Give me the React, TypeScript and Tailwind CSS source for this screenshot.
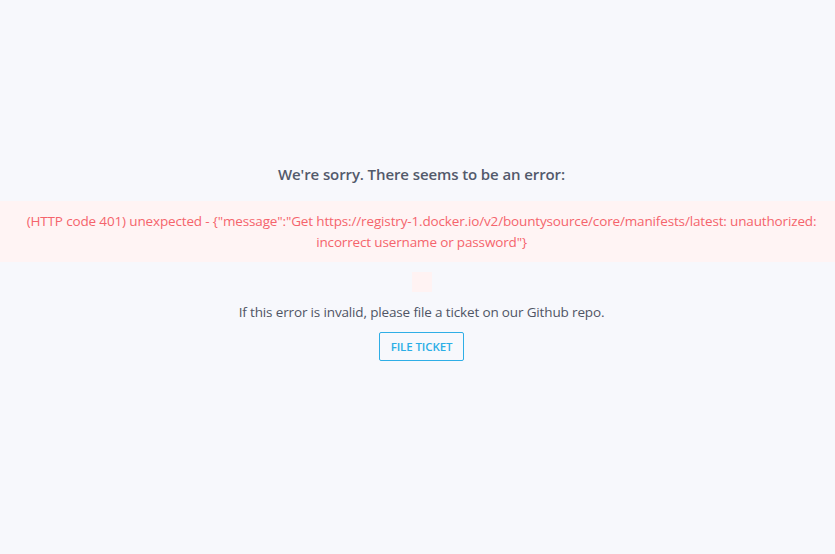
export default function App() {
  return (
    <div className="min-h-screen bg-[#f7f8fc] font-['Open_Sans',sans-serif] pt-[164px]">
      <h2 className="pl-2 text-center text-[15px] font-semibold leading-5 tracking-[-0.1px] text-[#535a6b]">
        We're sorry. There seems to be an error:
      </h2>
      <div className="mt-[17px] bg-[#fff4f4] pt-[10px] pb-[9px] pl-6 pr-4 text-center text-[13.5px] leading-[21px] tracking-[-0.15px] text-[#f5646c]">
        (HTTP code 401) unexpected - {'{"message":"Get https://registry-1.docker.io/v2/bountysource/core/manifests/latest: unauthorized: incorrect username or password"}'}
      </div>
      <div className="mt-[10px] flex justify-center pl-2">
        <div className="h-5 w-5 bg-[#fff3f3]" />
      </div>
      <p className="mt-[10px] pl-2 text-center text-[13.5px] leading-5 tracking-[-0.15px] text-[#4f5565]">
        If this error is invalid, please file a ticket on our Github repo.
      </p>
      <div className="mt-[10px] flex justify-center pl-2">
        <a
          href="#"
          className="flex h-[29px] w-[85px] items-center justify-center rounded-[2px] border border-[#2eaee6] text-[11.5px] font-semibold tracking-[-0.1px] text-[#2aaee6]"
        >
          FILE TICKET
        </a>
      </div>
    </div>
  );
}
